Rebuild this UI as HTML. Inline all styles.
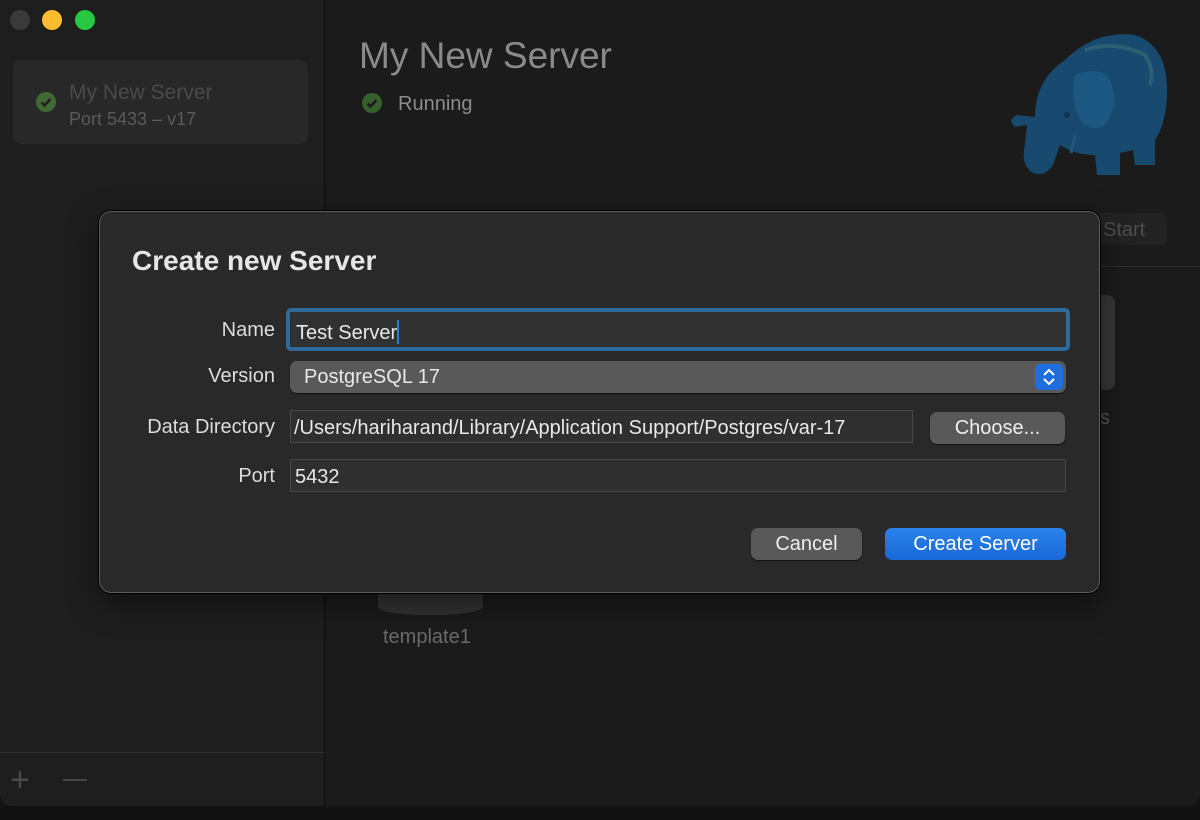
<!DOCTYPE html>
<html><head><meta charset="utf-8"><style>
*{margin:0;padding:0;box-sizing:border-box}
body{width:1200px;height:820px;background:#121212;font-family:"Liberation Sans",sans-serif;position:relative;overflow:hidden}
.a{position:absolute}
.lbl{position:absolute;right:925px;color:#dcdcdc;font-size:20px;text-align:right;white-space:nowrap}
.fld{position:absolute;color:#e8e8e8;font-size:20px;white-space:nowrap;overflow:hidden}
</style></head><body>
<div class="a" style="left:0;top:0;width:1200px;height:806px;background:#1b1b1b;border-radius:0 0 12px 12px"></div>
<div class="a" style="left:0;top:0;width:325px;height:806px;background:#1e1e1e;border-right:1px solid #0c0c0c;border-radius:0 0 0 12px"></div>
<div class="a" style="left:0;top:752px;width:325px;height:1px;background:#2f2f2f"></div>
<div class="a" style="left:10px;top:10px;width:20px;height:20px;border-radius:50%;background:#3a3a3a"></div>
<div class="a" style="left:42px;top:10px;width:20px;height:20px;border-radius:50%;background:#febc2e"></div>
<div class="a" style="left:75px;top:10px;width:20px;height:20px;border-radius:50%;background:#28c840"></div>
<div class="a" style="left:13px;top:60px;width:295px;height:84px;background:#282828;border-radius:8px"></div>
<svg class="a" style="left:36px;top:92px" width="20" height="20"><circle cx="10" cy="10" r="10" fill="#3f6a34"/><path d="M5.5 10.5l3 3 6-6.5" stroke="#1f1f1f" stroke-width="2.6" fill="none"/></svg>
<div class="a" style="left:69px;top:81px;color:#4a4a4a;font-size:21px">My New Server</div>
<div class="a" style="left:69px;top:109px;color:#5a5a5a;font-size:18px">Port 5433 – v17</div>
<div class="a" style="left:10px;top:763px;color:#4a4a4a;font-size:34px;line-height:34px;font-weight:300">+</div>
<div class="a" style="left:63px;top:779px;width:24px;height:2px;background:#474747"></div>
<div class="a" style="left:359px;top:35px;color:#8a8a8a;font-size:37px">My New Server</div>
<svg class="a" style="left:362px;top:93px" width="20" height="20"><circle cx="10" cy="10" r="10" fill="#35602b"/><path d="M5.5 10.5l3 3 6-6.5" stroke="#1c1c1c" stroke-width="2.6" fill="none"/></svg>
<div class="a" style="left:398px;top:93px;color:#8c8c8c;font-size:20px">Running</div>
<svg class="a" style="left:1005px;top:25px" width="165" height="160">
<path d="M60 35 Q90 5 130 10 Q160 20 162 60 Q163 95 150 115 L150 140 L130 140 L128 125 L115 128 L115 150 L92 150 L90 130 Q70 130 55 120 L48 140 Q40 152 28 148 Q15 140 20 120 L22 100 L10 102 Q2 95 12 90 L30 92 Q30 55 60 35Z" fill="#174a6e"/>
<path d="M70 50 Q95 40 105 55 Q115 80 100 100 Q85 108 75 95 Q65 75 70 50Z" fill="#1c5781"/>
<path d="M80 25 Q110 15 140 30 Q150 45 145 60" stroke="#3a6e74" stroke-width="4" fill="none" opacity=".6"/>
<circle cx="62" cy="90" r="3" fill="#0f3550"/>
<path d="M70 110 L66 128" stroke="#22587e" stroke-width="3"/>
</svg>
<div class="a" style="left:1095px;top:213px;width:72px;height:32px;background:#222;border-radius:6px;color:#4e4e4e;font-size:20px;padding:6px 0 0 8px">Start</div>
<div class="a" style="left:1085px;top:266px;width:115px;height:1px;background:#2c2c2c"></div>
<div class="a" style="left:1085px;top:295px;width:30px;height:95px;background:#373737;border-radius:0 8px 8px 0"></div>
<div class="a" style="left:1100px;top:407px;color:#555;font-size:20px">s</div>
<div class="a" style="left:378px;top:585px;width:105px;height:30px;background:#333;border-radius:0 0 50px 50px/0 0 8px 8px"></div>
<div class="a" style="left:383px;top:626px;color:#6a6a6a;font-size:20px">template1</div>

<div class="a" style="left:99px;top:211px;width:1001px;height:382px;background:#292929;border:1px solid #5c5c5c;border-radius:12px;box-shadow:0 0 0 1px #000,0 10px 30px rgba(0,0,0,.5)"></div>
<div class="a" style="left:132px;top:245px;color:#e6e6e6;font-size:28px;font-weight:bold">Create new Server</div>
<div class="lbl" style="top:319px">Name</div>
<div class="lbl" style="top:365px">Version</div>
<div class="lbl" style="top:416px">Data Directory</div>
<div class="lbl" style="top:465px">Port</div>
<div class="a" style="left:286px;top:308px;width:784px;height:43px;border:4px solid #2e6a9a;border-radius:5px;background:#313131"></div>
<div class="fld" style="left:296px;top:320px">Test Server<span style="display:inline-block;width:2px;height:24px;background:#2a7bde;vertical-align:-5px"></span></div>
<div class="a" style="left:290px;top:361px;width:776px;height:32px;background:#595959;border-radius:7px;box-shadow:0 1px 1px #111"></div>
<div class="fld" style="left:304px;top:366px">PostgreSQL 17</div>
<div class="a" style="left:1035px;top:364px;width:28px;height:26px;background:#1f6ee0;border-radius:5px"></div>
<svg class="a" style="left:1035px;top:364px" width="28" height="26"><path d="M9 11l5-5 5 5M9 15l5 5 5-5" stroke="#fff" stroke-width="2" fill="none"/></svg>
<div class="a" style="left:290px;top:410px;width:623px;height:33px;background:#2f2f2f;border:1px solid #484848"></div>
<div class="fld" style="left:294px;top:417px;width:618px">/Users/hariharand/Library/Application Support/Postgres/var-17</div>
<div class="a" style="left:930px;top:412px;width:135px;height:32px;background:#595959;border-radius:7px;box-shadow:0 1px 1px #111;color:#eee;font-size:20px;text-align:center;line-height:33px">Choose...</div>
<div class="a" style="left:290px;top:459px;width:776px;height:33px;background:#2f2f2f;border:1px solid #484848"></div>
<div class="fld" style="left:295px;top:466px">5432</div>
<div class="a" style="left:751px;top:528px;width:111px;height:32px;background:#595959;border-radius:7px;box-shadow:0 1px 1px #111;color:#eee;font-size:20px;text-align:center;line-height:33px">Cancel</div>
<div class="a" style="left:885px;top:528px;width:181px;height:32px;background:linear-gradient(#2a82ea,#1a68d8);border-radius:7px;color:#fff;font-size:20px;text-align:center;line-height:33px">Create Server</div>
</body></html>
